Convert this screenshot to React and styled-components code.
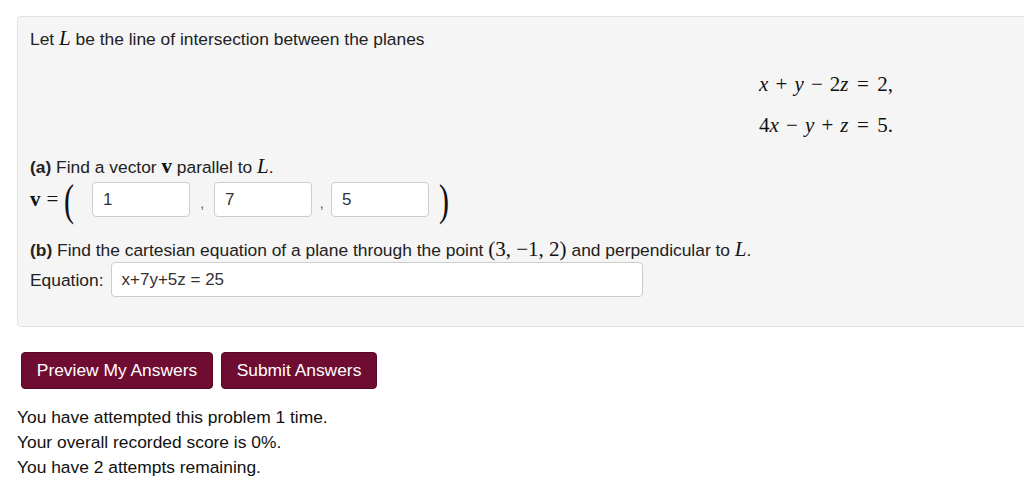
import React from "react";
import styled, { createGlobalStyle } from "styled-components";

const Global = createGlobalStyle`
  html, body { margin: 0; padding: 0; background: #fff; overflow: hidden; }
  body { font-family: "Liberation Sans", Arial, sans-serif; font-size: 17.4px; color: #222; }
`;

const Page = styled.div`
  padding: 16px 0 0 17px;
  width: 1007px;
`;

const Panel = styled.div`
  box-sizing: border-box;
  width: 1040px;
  background: #f5f5f5;
  border: 1px solid #e3e3e3;
  border-radius: 4px;
  padding: 11px 12px 29px 12px;
`;

const Line = styled.div`
  line-height: 20px;
  margin-top: ${(p) => p.$mt || 0}px;
`;

const M = styled.span`
  font-family: "Liberation Serif", "DejaVu Serif", serif;
  font-style: ${(p) => (p.$up ? "normal" : "italic")};
  font-weight: ${(p) => (p.$bold ? "bold" : "normal")};
  font-size: ${(p) => p.$size || 21}px;
  line-height: 1;
  color: #111;
`;

const EqGrid = styled.div`
  display: grid;
  grid-template-columns: auto auto;
  width: max-content;
  margin: 15px 0 0 729px;
  font-family: "Liberation Serif", "DejaVu Serif", serif;
  font-size: 21px;
  color: #111;
`;

const EqCell = styled.div`
  line-height: 41px;
  text-align: ${(p) => (p.$right ? "right" : "left")};
  white-space: pre;
`;

const I = styled.i`
  font-style: italic;
`;

const Op = styled.span`
  display: inline-block;
  margin: 0 ${(p) => p.$s || 0.34}em;
`;

const Row = styled.div`
  display: flex;
  align-items: center;
  margin-top: ${(p) => p.$mt || 0}px;
`;

const BigParen = styled.span`
  font-family: "Liberation Serif", "DejaVu Serif", serif;
  font-size: 30px;
  display: inline-block;
  transform: scaleY(1.45);
  line-height: 35px;
  color: #111;
  margin: ${(p) => p.$m};
`;

const Input = styled.div`
  box-sizing: border-box;
  width: ${(p) => p.$w}px;
  height: 35px;
  background: #fff;
  border: 1px solid #ccc;
  border-radius: 4px;
  padding: 0 10px;
  display: flex;
  align-items: center;
  font-size: 17px;
  color: #333;
`;

const Comma = styled.span`
  display: inline-block;
  text-align: center;
  width: ${(p) => p.$w}px;
  font-size: 14px;
  color: #555;
  padding-top: 6px;
`;

const Label = styled.span`
  margin-right: 7px;
  line-height: 20px;
`;

const Buttons = styled.div`
  display: flex;
  gap: 8px;
  margin: 25px 0 0 4px;
`;

const Button = styled.button`
  box-sizing: border-box;
  height: 37px;
  padding: 0;
  background: #6f0c31;
  border: 1px solid #5a0726;
  border-radius: 4px;
  color: #fff;
  font-family: "Liberation Sans", Arial, sans-serif;
  font-size: 17.4px;
  width: ${(p) => p.$w}px;
`;

const Info = styled.div`
  margin-top: 16px;
  line-height: 25px;
  color: #111;
`;

export default function App() {
  return (
    <>
      <Global />
      <Page>
        <Panel>
          <Line>
            Let <M>L</M> be the line of intersection between the planes
          </Line>
          <EqGrid>
            <EqCell $right>
              <I>x</I><Op>+</Op><I>y</I><Op>−</Op>2<I>z</I>
            </EqCell>
            <EqCell>
              <Op $s={0.4}>=</Op>2,
            </EqCell>
            <EqCell $right>
              4<I>x</I><Op>−</Op><I>y</I><Op>+</Op><I>z</I>
            </EqCell>
            <EqCell>
              <Op $s={0.4}>=</Op>5.
            </EqCell>
          </EqGrid>
          <Line $mt={10}>
            <b>(a)</b> Find a vector <M $up $bold>v</M> parallel to <M>L</M>.
          </Line>
          <Row $mt={5}>
            <M $up $bold>v</M>
            <M $up>
              <Op $s={0.28}>=</Op>
            </M>
            <BigParen $m="0 18px 0 0">(</BigParen>
            <Input $w={98}>1</Input>
            <Comma $w={24}>,</Comma>
            <Input $w={98}>7</Input>
            <Comma $w={19}>,</Comma>
            <Input $w={98}>5</Input>
            <BigParen $m="0 0 0 10px">)</BigParen>
          </Row>
          <Line $mt={22}>
            <b>(b)</b> Find the cartesian equation of a plane through the point{" "}
            <M $up>(3, −1, 2)</M> and perpendicular to <M>L</M>.
          </Line>
          <Row $mt={2}>
            <Label>Equation:</Label>
            <Input $w={532}>x+7y+5z = 25</Input>
          </Row>
        </Panel>
        <Buttons>
          <Button $w={192}>Preview My Answers</Button>
          <Button $w={156}>Submit Answers</Button>
        </Buttons>
        <Info>
          You have attempted this problem 1 time.
          <br />
          Your overall recorded score is 0%.
          <br />
          You have 2 attempts remaining.
        </Info>
      </Page>
    </>
  );
}
